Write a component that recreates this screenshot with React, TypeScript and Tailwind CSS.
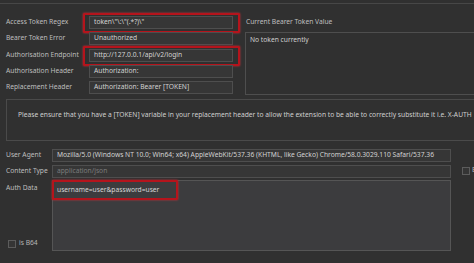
import React from 'react';

const Field = ({ value, muted = false }: { value: string; muted?: boolean }) => (
  <div
    className={`h-[13px] flex items-center px-[4px] bg-[#363636] border border-[#4e4e4e] whitespace-nowrap overflow-hidden ${
      muted ? 'text-[#7c7c7c]' : 'text-[#d2d2d2]'
    }`}
  >
    {value}
  </div>
);

// red highlight drawn over a field
const Marker = ({ className }: { className: string }) => (
  <div
    className={`absolute border-[2px] border-[#b5141c] rounded-[1px] shadow-[0_0_2px_#e0303a] pointer-events-none ${className}`}
  />
);

const App: React.FC = () => {
  const topRows = [
    { label: 'Access Token Regex', value: 'token\\"\\:\\"(.*?)\\"', marked: true },
    { label: 'Bearer Token Error', value: 'Unauthorized', marked: false },
    { label: 'Authorisation Endpoint', value: 'http://127.0.0.1/api/v2/login', marked: true },
    { label: 'Authorisation Header', value: 'Authorization:', marked: false },
    { label: 'Replacement Header', value: 'Authorization: Bearer [TOKEN]', marked: false },
  ];

  return (
    <div
      className="w-[474px] h-[263px] overflow-hidden bg-[#303030] text-[6.7px] leading-none text-[#bfbfbf]"
      style={{ fontFamily: '"Noto Sans", "Liberation Sans", sans-serif' }}
    >
      <div className="h-[4px] border-b border-[#474747]" />

      <div className="flex pt-[12px] pl-[6px]">
        <div className="flex flex-col gap-[3.3px] w-[227px] shrink-0">
          {topRows.map((row) => (
            <div key={row.label} className="flex items-center">
              <span className="w-[83px] shrink-0 whitespace-nowrap">{row.label}</span>
              <div className="relative flex-1">
                <Field value={row.value} />
                {row.marked && <Marker className="-left-[6px] -right-[7px] -top-[3px] -bottom-[4px]" />}
              </div>
            </div>
          ))}
        </div>
        <div className="ml-[12px] flex-1 flex flex-col">
          <span className="pl-[1px] h-[16px] pt-[2.5px] whitespace-nowrap">Current Bearer Token Value</span>
          <div className="h-[63px] -mr-[10px] border border-[#4e4e4e] px-[4px] pt-[4px] text-[#cfcfcf]">
            No token currently
          </div>
        </div>
      </div>

      <div className="ml-[6px] -mr-[10px] mt-[4px] h-[42px] border border-[#4a4a4a] pl-[11px] pt-[12px] whitespace-nowrap overflow-hidden text-[#cfcfcf]">
        Please ensure that you have a [TOKEN] variable in your replacement header to allow the extension to be able
        to correctly substitute it i.e. X-AUTH
      </div>

      <div className="flex pl-[6px] pt-[8px]">
        <div className="w-[46px] shrink-0 flex flex-col">
          <span className="h-[13px] flex items-center">User Agent</span>
          <span className="h-[13px] flex items-center mt-[3px]">Content Type</span>
          <span className="mt-[4px] pt-[3px]">Auth Data</span>
          <div className="mt-[48px] flex items-center gap-[3px] pl-[2px]">
            <div className="w-[8px] h-[8px] border border-[#5c5c5c] bg-[#353535]" />
            <span className="text-[#b5b5b5]">is B64</span>
          </div>
        </div>
        <div className="w-[399px] shrink-0 flex flex-col">
          <Field value="Mozilla/5.0 (Windows NT 10.0; Win64; x64) AppleWebKit/537.36 (KHTML, like Gecko) Chrome/58.0.3029.110 Safari/537.36" />
          <div className="mt-[3px]">
            <Field value="application/json" muted />
          </div>
          <div className="mt-[2px] h-[71px] bg-[#3c3c3e] border border-[#555] relative">
            <div className="pl-[4px] pt-[6px] text-[#d6d6d6] whitespace-nowrap">username=user&amp;password=user</div>
            <Marker className="-left-[1px] w-[126px] -top-[1px] h-[20px]" />
          </div>
        </div>
        <div className="pl-[11px] pt-[18px] flex items-start gap-[2px]">
          <div className="w-[8px] h-[8px] border border-[#5c5c5c] bg-[#353535] shrink-0" />
          <span className="whitespace-nowrap">B</span>
        </div>
      </div>
    </div>
  );
};

export default App;
